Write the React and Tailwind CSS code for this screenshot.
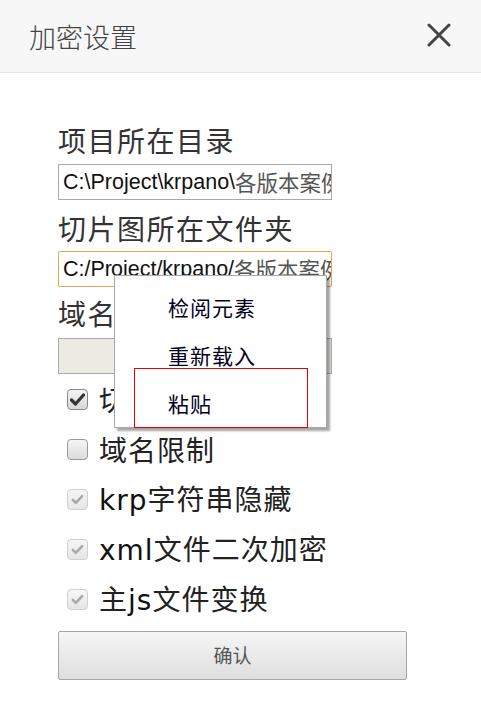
import React from "react";

const cjk = { fontFamily: '"Noto Sans CJK SC", "Noto Sans", sans-serif' };
const latin = { fontFamily: '"DejaVu Sans", "Noto Sans CJK SC", sans-serif' };
const arial = { fontFamily: '"Liberation Sans", "Noto Sans CJK SC", sans-serif' };

function Check({ state }) {
  if (state === "on") {
    return (
      <span className="flex h-[21px] w-[21px] shrink-0 items-center justify-center rounded-[4px] border border-[#8a8a8a] bg-gradient-to-b from-[#f4f4f4] to-[#d8d8d8]">
        <svg width="15" height="13" viewBox="0 0 15 13">
          <path d="M1.5 7 L5.5 11 L13.5 2" fill="none" stroke="#333" strokeWidth="3.2" strokeLinecap="round" strokeLinejoin="round" />
        </svg>
      </span>
    );
  }
  if (state === "dis") {
    return (
      <span className="flex h-[21px] w-[21px] shrink-0 items-center justify-center rounded-[4px] border border-[#cfcfcf] bg-gradient-to-b from-[#f6f6f6] to-[#e6e6e6]">
        <svg width="13" height="11" viewBox="0 0 15 13">
          <path d="M2 7 L5.5 10.5 L13 2.5" fill="none" stroke="#a8a8a8" strokeWidth="3" strokeLinecap="round" strokeLinejoin="round" />
        </svg>
      </span>
    );
  }
  return (
    <span className="h-[21px] w-[21px] shrink-0 rounded-[4px] border border-[#9a9a9a] bg-gradient-to-b from-[#f5f5f5] to-[#dcdcdc]" />
  );
}

function Row({ state, children }) {
  return (
    <div className="flex h-[50px] items-center pl-[9px]">
      <Check state={state} />
      <span className="ml-[11px] text-[28px] leading-none tracking-[1px] text-[#222]">{children}</span>
    </div>
  );
}

export default function App() {
  return (
    <div className="relative h-[728px] w-[481px] overflow-hidden bg-white" style={cjk}>
      {/* Header */}
      <div className="flex h-[73px] items-center justify-between border-b border-[#e6e6e6] bg-[#f7f7f7] pl-[29px] pr-[30px]">
        <span className="text-[27px] font-light leading-none text-[#444]">加密设置</span>
        <svg width="24" height="24" viewBox="0 0 24 24" className="mt-[-2px]">
          <path d="M2 2 L22 22 M22 2 L2 22" stroke="#444" strokeWidth="3" strokeLinecap="round" />
        </svg>
      </div>

      {/* Form */}
      <div className="pl-[58px]">
        <div className="mt-[49px] flex h-9 items-center text-[28px] leading-none tracking-[1.5px] text-[#333]">项目所在目录</div>
        <div className="mt-[6px] flex h-9 w-[274px] items-center overflow-hidden whitespace-nowrap border border-[#a9a9a9] pl-1 pt-[1px] text-[21.5px] text-[#111]" style={arial}>
          C:\Project\krpano\<span className="text-[#555]" style={cjk}>各版本案例</span>
        </div>

        <div className="mt-[10px] flex h-9 items-center text-[28px] leading-none tracking-[1.5px] text-[#333]">切片图所在文件夹</div>
        <div className="mt-[5px] flex h-9 w-[274px] items-center overflow-hidden whitespace-nowrap rounded-[2px] border border-[#e2a84a] pl-1 pt-[1px] text-[21.5px] text-[#111]" style={arial}>
          C:/Pr<span className="mr-[-1px] inline-block h-[27px] w-px bg-black" />oject/krpano/<span className="text-[#555]" style={cjk}>各版本案例</span>
        </div>

        <div className="mt-[8px] flex h-9 items-center text-[28px] leading-none tracking-[1.5px] text-[#333]">域名限制列表</div>
        <div className="mt-[7px] h-9 w-[274px] border border-[#a9a9a9] bg-[#ebebe4]" />

        <Row state="on">切片加密</Row>
        <Row state="off">域名限制</Row>
        <Row state="dis"><span style={latin} className="text-[#111]">krp</span>字符串隐藏</Row>
        <Row state="dis"><span style={latin} className="text-[#111]">xml</span>文件二次加密</Row>
        <Row state="dis">主<span style={latin} className="text-[#111]">js</span>文件变换</Row>

        <button type="button" className="mt-[7px] flex h-[49px] w-[349px] items-center justify-center rounded-[2px] border border-[#a6a6a6] bg-gradient-to-b from-[#f6f6f6] to-[#dedede] text-[19px] text-[#555]">
          确认
        </button>
      </div>

      {/* Context menu */}
      <div className="absolute left-[114px] top-[275px] h-[153px] w-[213px] border border-[#a8a8a8] bg-white pt-[7px] shadow-[3px_3px_2px_rgba(0,0,0,0.35)]">
        <div className="flex h-12 items-center pl-[53px] text-[21px] leading-none tracking-[1px] text-[#000022]">检阅元素</div>
        <div className="flex h-12 items-center pl-[53px] text-[21px] leading-none tracking-[1px] text-[#000022]">重新载入</div>
        <div className="ml-[19px] mt-[-11px] flex h-[60px] w-[174px] items-center border border-[#e00000] pl-[33px] pt-[10px] text-[21px] leading-none tracking-[1px] text-[#000022]">粘贴</div>
      </div>
    </div>
  );
}
